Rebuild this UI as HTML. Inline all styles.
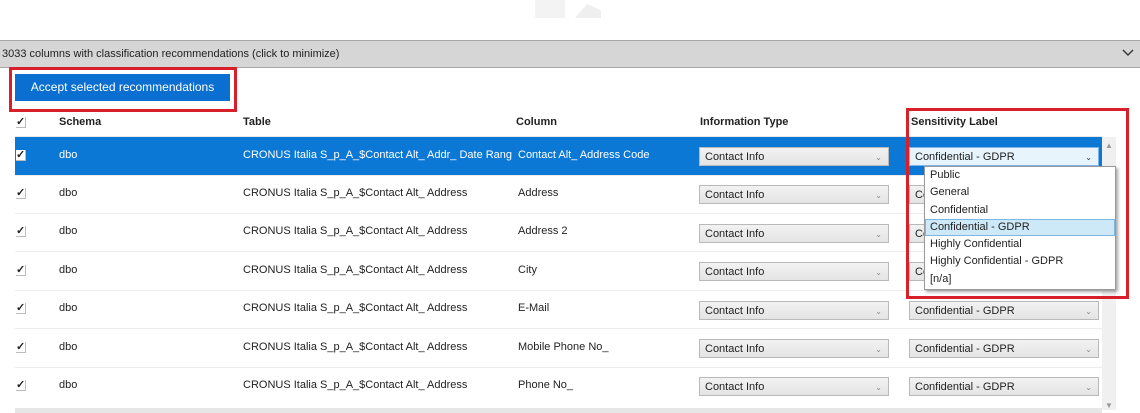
<!DOCTYPE html>
<html><head><style>
body{margin:0;width:1140px;height:413px;background:#fff;font-family:"Liberation Sans",sans-serif;font-size:11px;color:#222;position:relative;overflow:hidden}
.a{position:absolute;white-space:nowrap}
.bar{left:0;top:40px;width:1140px;height:26px;background:#d6d6d6;border-top:1px solid #a8a8a8;border-bottom:1px solid #a8a8a8}
.btn{left:15px;top:74px;width:215px;height:27px;background:#0a6fd0;color:#fff;font-size:12px;line-height:27px;text-align:center}
.red{border:3px solid #d9202a;box-sizing:border-box}
.row{left:15px;width:1087px;height:38px;border-bottom:1px solid #ececec}
.cb{width:9px;height:10px;border-right:1px solid #bbb;border-bottom:1px solid #bbb;font-size:11px;line-height:10px;color:#222;font-weight:bold}
.dd{width:190px;height:19px;border:1px solid #b9b9b9;background:linear-gradient(#f2f2f2,#e4e4e4);color:#222;line-height:19px;padding-left:5px;box-sizing:border-box}
.dd span{position:absolute;right:6px;top:0;font-size:8px;color:#888}
.hd{font-weight:bold;top:116px}
.list{left:924px;top:166px;width:192px;height:124px;background:#fff;border:1px solid #999;box-shadow:2px 2px 3px rgba(0,0,0,.35);box-sizing:border-box}
.list div{height:17.3px;line-height:17px;padding-left:5px}
</style></head><body>
<svg class="a" style="left:535px;top:0" width="66" height="18"><rect x="0" y="0" width="30" height="18" fill="#f3f3f3"/><path d="M40 18 L52 4 L66 10 L66 18Z" fill="#efefef"/></svg>
<div class="a bar"><span style="position:absolute;left:2px;top:7px">3033 columns with classification recommendations (click to minimize)</span><svg style="position:absolute;right:6px;top:8px" width="12" height="8"><path d="M1 1 L6 6 L11 1" stroke="#333" stroke-width="1.4" fill="none"/></svg></div>
<div class="a red" style="left:9px;top:67px;width:228px;height:45px"></div>
<div class="a btn">Accept selected recommendations</div>
<div class="a cb" style="left:16px;top:117px">&#10003;</div>
<div class="a hd" style="left:59px">Schema</div>
<div class="a hd" style="left:243px">Table</div>
<div class="a hd" style="left:516px">Column</div>
<div class="a hd" style="left:700px">Information Type</div>
<div class="a hd" style="left:911px">Sensitivity Label</div>
<div class="a" style="left:15px;top:136px;width:1087px;height:1px;background:#e8e8e8"></div>
<div class="a" style="left:1102px;top:137px;width:14px;height:273px;background:#f0f0f0"><div style="font-size:8px;color:#999;text-align:center;margin-top:4px">&#9650;</div><div style="position:absolute;bottom:0;width:14px;font-size:8px;color:#999;text-align:center">&#9660;</div></div>

<div class="a row" style="top:137px;background:#0a78d4"></div>
<div class="a cb" style="left:16px;top:150px;background:#fff">&#10003;</div>
<div class="a" style="left:59px;top:149px;color:#fff">dbo</div>
<div class="a" style="left:243px;top:149px;color:#fff">CRONUS Italia S_p_A_$Contact Alt_ Addr_ Date Rang</div>
<div class="a" style="left:518px;top:149px;color:#fff">Contact Alt_ Address Code</div>
<div class="a dd" style="left:699px;top:147px">Contact Info<span>&#8964;</span></div>
<div class="a dd" style="left:909px;top:147px;background:#e8f4fc;border-color:#7eb4ea">Confidential - GDPR<span style="color:#333">&#8964;</span></div>

<div class="a row" style="top:175px"></div>
<div class="a cb" style="left:16px;top:188px">&#10003;</div><div class="a" style="left:59px;top:187px">dbo</div><div class="a" style="left:243px;top:187px">CRONUS Italia S_p_A_$Contact Alt_ Address</div><div class="a" style="left:518px;top:187px">Address</div><div class="a dd" style="left:699px;top:185px">Contact Info<span>&#8964;</span></div><div class="a dd" style="left:909px;top:185px">Confidential - GDPR<span>&#8964;</span></div>

<div class="a row" style="top:213px"></div>
<div class="a cb" style="left:16px;top:226px">&#10003;</div><div class="a" style="left:59px;top:225px">dbo</div><div class="a" style="left:243px;top:225px">CRONUS Italia S_p_A_$Contact Alt_ Address</div><div class="a" style="left:518px;top:225px">Address 2</div><div class="a dd" style="left:699px;top:224px">Contact Info<span>&#8964;</span></div><div class="a dd" style="left:909px;top:224px">Confidential - GDPR<span>&#8964;</span></div>

<div class="a row" style="top:252px"></div>
<div class="a cb" style="left:16px;top:265px">&#10003;</div><div class="a" style="left:59px;top:264px">dbo</div><div class="a" style="left:243px;top:264px">CRONUS Italia S_p_A_$Contact Alt_ Address</div><div class="a" style="left:518px;top:264px">City</div><div class="a dd" style="left:699px;top:262px">Contact Info<span>&#8964;</span></div><div class="a dd" style="left:909px;top:262px">Confidential - GDPR<span>&#8964;</span></div>

<div class="a row" style="top:290px"></div>
<div class="a cb" style="left:16px;top:303px">&#10003;</div><div class="a" style="left:59px;top:302px">dbo</div><div class="a" style="left:243px;top:302px">CRONUS Italia S_p_A_$Contact Alt_ Address</div><div class="a" style="left:518px;top:302px">E-Mail</div><div class="a dd" style="left:699px;top:301px">Contact Info<span>&#8964;</span></div><div class="a dd" style="left:909px;top:301px">Confidential - GDPR<span>&#8964;</span></div>

<div class="a row" style="top:329px"></div>
<div class="a cb" style="left:16px;top:342px">&#10003;</div><div class="a" style="left:59px;top:341px">dbo</div><div class="a" style="left:243px;top:341px">CRONUS Italia S_p_A_$Contact Alt_ Address</div><div class="a" style="left:518px;top:341px">Mobile Phone No_</div><div class="a dd" style="left:699px;top:339px">Contact Info<span>&#8964;</span></div><div class="a dd" style="left:909px;top:339px">Confidential - GDPR<span>&#8964;</span></div>

<div class="a row" style="top:367px;border-bottom:none"></div>
<div class="a cb" style="left:16px;top:380px">&#10003;</div><div class="a" style="left:59px;top:379px">dbo</div><div class="a" style="left:243px;top:379px">CRONUS Italia S_p_A_$Contact Alt_ Address</div><div class="a" style="left:518px;top:379px">Phone No_</div><div class="a dd" style="left:699px;top:377px">Contact Info<span>&#8964;</span></div><div class="a dd" style="left:909px;top:377px">Confidential - GDPR<span>&#8964;</span></div>

<div class="a" style="left:15px;top:408px;width:1087px;height:5px;background:#e6e6e6"></div>

<div class="a list">
<div>Public</div><div>General</div><div>Confidential</div>
<div style="background:#cde8f7;outline:1px solid #7ab8e4;outline-offset:-1px">Confidential - GDPR</div>
<div>Highly Confidential</div><div>Highly Confidential - GDPR</div><div>[n/a]</div>
</div>
<div class="a red" style="left:906px;top:108px;width:223px;height:191px"></div>
</body></html>
